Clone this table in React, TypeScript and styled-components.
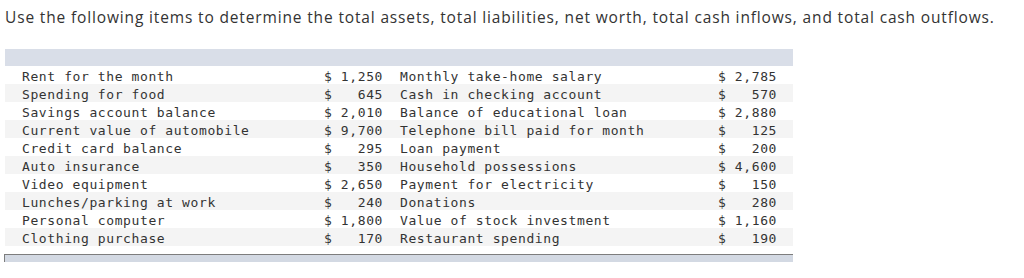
import React from "react";
import styled, { createGlobalStyle } from "styled-components";

const Global = createGlobalStyle`
  html, body { margin: 0; padding: 0; background: #ffffff; }
  body { width: 1024px; height: 278px; overflow: hidden; }
`;

const Page = styled.div`
  padding: 8px 0 0 5px;
  display: flex;
  flex-direction: column;
`;

const Prompt = styled.p`
  margin: 0;
  font-family: "Open Sans", Lato, sans-serif;
  font-size: 15.5px;
  line-height: 18px;
  color: #333333;
  letter-spacing: 0.85px;
  white-space: nowrap;
`;

const Table = styled.div`
  margin-top: 23px;
  width: 788px;
  display: flex;
  flex-direction: column;
`;

const HeaderBand = styled.div`
  height: 17px;
  background: #d9dee8;
`;

const Row = styled.div<{ $shaded: boolean }>`
  display: grid;
  grid-template-columns: 302px 76px 318px 1fr;
  align-items: start;
  box-sizing: border-box;
  padding: 2px 0 0 17px;
  height: 18px;
  background: ${(p) => (p.$shaded ? "#f4f4f4" : "#ffffff")};
  font-family: "DejaVu Sans Mono", "Liberation Mono", monospace;
  font-size: 13px;
  letter-spacing: 0.6px;
  color: #333333;
  white-space: pre;
`;

const Cell = styled.span`
  line-height: 18px;
`;

const ScrollBar = styled.div`
  margin-top: 8px;
  margin-left: -1px;
  height: 7px;
  background: #d3d9e3;
  border-top: 1px solid #7d7d7d;
  border-left: 1px solid #7d7d7d;
`;

type Item = [string, number, string, number];

const items: Item[] = [
  ["Rent for the month", 1250, "Monthly take-home salary", 2785],
  ["Spending for food", 645, "Cash in checking account", 570],
  ["Savings account balance", 2010, "Balance of educational loan", 2880],
  ["Current value of automobile", 9700, "Telephone bill paid for month", 125],
  ["Credit card balance", 295, "Loan payment", 200],
  ["Auto insurance", 350, "Household possessions", 4600],
  ["Video equipment", 2650, "Payment for electricity", 150],
  ["Lunches/parking at work", 240, "Donations", 280],
  ["Personal computer", 1800, "Value of stock investment", 1160],
  ["Clothing purchase", 170, "Restaurant spending", 190],
];

const money = (n: number) => {
  const s = n.toLocaleString("en-US");
  return "$ " + s.padStart(5, " ");
};

export default function App() {
  return (
    <>
      <Global />
      <Page>
        <Prompt>
          Use the following items to determine the total assets, total liabilities, net worth, total cash inflows, and total cash outflows.
        </Prompt>
        <Table>
          <HeaderBand />
          {items.map((it, i) => (
            <Row key={i} $shaded={i % 2 === 1}>
              <Cell>{it[0]}</Cell>
              <Cell>{money(it[1])}</Cell>
              <Cell>{it[2]}</Cell>
              <Cell>{money(it[3])}</Cell>
            </Row>
          ))}
          <ScrollBar />
        </Table>
      </Page>
    </>
  );
}
